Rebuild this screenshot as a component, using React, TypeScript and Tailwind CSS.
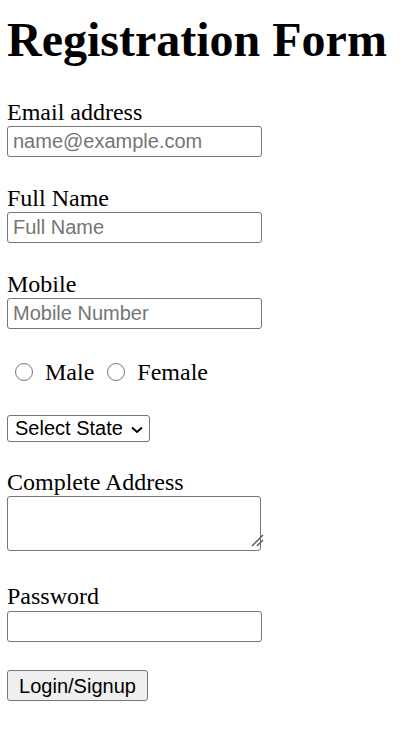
const serif = { fontFamily: '"Liberation Serif", "Times New Roman", serif' };

function Label({ children, className = "" }: { children: React.ReactNode; className?: string }) {
  return (
    <label className={`block h-[28px] text-[24px] leading-[28px] text-black ${className}`} style={serif}>
      {children}
    </label>
  );
}

function TextInput({ placeholder, type = "text", className = "" }: { placeholder?: string; type?: string; className?: string }) {
  return (
    <input
      type={type}
      placeholder={placeholder}
      className={`block w-[255px] h-[31px] border border-[#767676] rounded-[3px] bg-white pl-[5px] pr-[5px] text-[20px] text-black placeholder:text-[#757575] outline-none font-['Liberation_Sans',Arial,sans-serif] ${className}`}
    />
  );
}

function Radio({ label, className = "" }: { label: string; className?: string }) {
  return (
    <label className={`flex items-center ${className}`}>
      <span className="w-[18px] h-[18px] rounded-full border-[1.5px] border-[#767676] bg-white shrink-0" />
      <span className="ml-[12px] text-[24px] leading-[28px] text-black" style={serif}>
        {label}
      </span>
    </label>
  );
}

export default function App() {
  return (
    <div className="min-h-[729px] bg-white pl-[7px] pt-[12px] pb-[28px]">
      <h1 className="h-[55px] text-[48px] leading-[55px] font-bold text-black whitespace-nowrap" style={serif}>
        Registration Form
      </h1>

      <form className="flex flex-col items-start" onSubmit={(e) => e.preventDefault()}>
        <Label className="mt-[31px]">Email address</Label>
        <TextInput type="email" placeholder="name@example.com" />

        <Label className="mt-[27px]">Full Name</Label>
        <TextInput placeholder="Full Name" />

        <Label className="mt-[27px]">Mobile</Label>
        <TextInput placeholder="Mobile Number" />

        {/* Gender */}
        <div className="mt-[29px] h-[28px] flex items-center pl-[8px]">
          <Radio label="Male" />
          <Radio label="Female" className="ml-[13px]" />
        </div>

        {/* State */}
        <div className="relative mt-[29px]">
          <select className="appearance-none block w-[143px] h-[27px] border border-[#767676] rounded-[3px] bg-white pl-[7px] text-[20px] leading-[25px] text-black outline-none font-['Liberation_Sans',Arial,sans-serif]">
            <option>Select State</option>
          </select>
          <svg
            className="absolute left-[124px] top-[11px] pointer-events-none"
            width="12"
            height="8"
            viewBox="0 0 12 8"
            fill="none"
          >
            <path d="M1 1.5 L6 6 L11 1.5" stroke="#000" strokeWidth="2" />
          </svg>
        </div>

        <Label className="mt-[26px]">Complete Address</Label>
        <div className="relative">
          <textarea className="block w-[254px] h-[55px] border border-[#767676] rounded-[3px] bg-white resize-none outline-none text-[20px]" />
          <svg className="absolute left-[244px] top-[38px] pointer-events-none" width="13" height="13" viewBox="0 0 13 13">
            <path d="M12 1 L1 12" stroke="#5a5a5a" strokeWidth="1.5" />
            <path d="M12 6 L6 12" stroke="#5a5a5a" strokeWidth="1.5" />
          </svg>
        </div>

        <Label className="mt-[31px]">Password</Label>
        <TextInput type="password" className="mt-[1px]" />

        <button
          type="submit"
          className="mt-[28px] w-[141px] h-[31px] border border-[#767676] rounded-[3px] bg-[#efefef] text-[20px] text-black font-['Liberation_Sans',Arial,sans-serif]"
        >
          Login/Signup
        </button>
      </form>
    </div>
  );
}
